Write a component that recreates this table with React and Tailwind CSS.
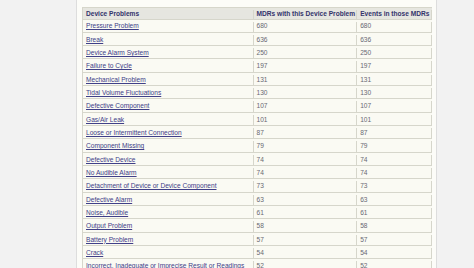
const rows = [
  ["Pressure Problem", 680],
  ["Break", 636],
  ["Device Alarm System", 250],
  ["Failure to Cycle", 197],
  ["Mechanical Problem", 131],
  ["Tidal Volume Fluctuations", 130],
  ["Defective Component", 107],
  ["Gas/Air Leak", 101],
  ["Loose or Intermittent Connection", 87],
  ["Component Missing", 79],
  ["Defective Device", 74],
  ["No Audible Alarm", 74],
  ["Detachment of Device or Device Component", 73],
  ["Defective Alarm", 63],
  ["Noise, Audible", 61],
  ["Output Problem", 58],
  ["Battery Problem", 57],
  ["Crack", 54],
  ["Incorrect, Inadequate or Imprecise Result or Readings", 52],
];

export default function App() {
  return (
    <div
      className="flex h-[268px] w-[474px] overflow-hidden bg-[#f2f2f2] text-[6.6px] leading-none"
      style={{ fontFamily: '"Liberation Sans", Arial, sans-serif' }}
    >
      <div className="w-[76px] shrink-0" />
      <div className="flex w-[361px] shrink-0 flex-col border-x border-[#dddddd] bg-[#fcfcf8] pl-[5px] pr-[4px] pt-[7px]">
        <div className="flex w-[350px] flex-col border-l border-[#d6d6cb]">
          <div className="flex h-[12.5px] border-y border-[#d6d6cb] bg-[#e6e6e0] pt-[1.5px] font-bold text-[#33336b]">
            <div className="flex w-[171px] items-center border-r border-[#d6d6cb] pl-[3px]">Device Problems</div>
            <div className="flex w-[104px] items-center border-r border-[#d6d6cb] pl-[3px]">MDRs with this Device Problem</div>
            <div className="flex w-[75px] items-center border-r border-[#d6d6cb] pl-[3px]">Events in those MDRs</div>
          </div>
          {rows.map(([name, n]) => (
            <div key={name} className="flex h-[13.333px] shrink-0 border-b border-[#d6d6cb] bg-[#fafaf3] pt-[2px]">
              <div className="flex w-[171px] items-center whitespace-nowrap border-r border-[#d6d6cb] pl-[3px]">
                <a className="text-[#404088] underline decoration-[0.5px] underline-offset-[1px]">{name}</a>
              </div>
              <div className="flex w-[104px] items-center border-r border-[#d6d6cb] pl-[3px] text-[#686872]">{n}</div>
              <div className="flex w-[75px] items-center border-r border-[#d6d6cb] pl-[3px] text-[#686872]">{n}</div>
            </div>
          ))}
        </div>
      </div>
      <div className="flex-1" />
    </div>
  );
}
